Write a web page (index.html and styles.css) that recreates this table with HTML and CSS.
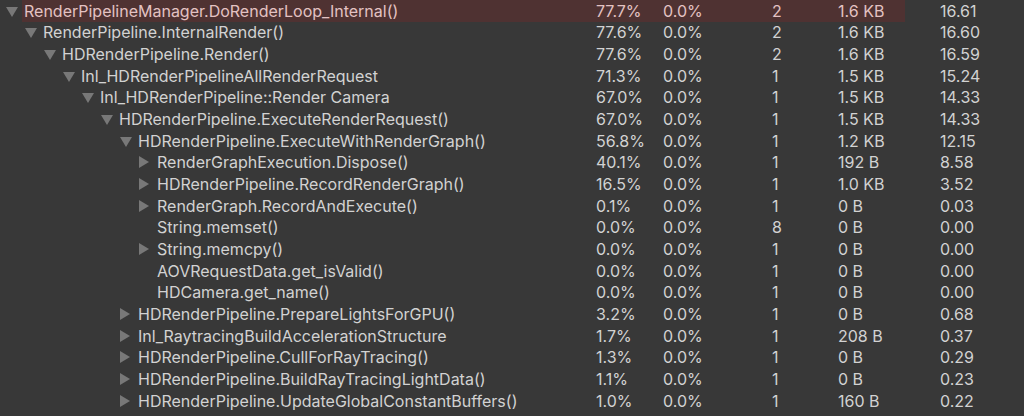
FILE: index.html
```html
<!DOCTYPE html>
<html>
<head>
<meta charset="utf-8">
<link rel="stylesheet" href="styles.css">
</head>
<body>
<div class="tree">
  <div class="row l0 selected"><span class="tw down"></span><div class="main"><span class="name">RenderPipelineManager.DoRenderLoop_Internal()</span><span class="c pct">77.7%</span><span class="c self">0.0%</span><span class="c calls">2</span><span class="c gc">1.6 KB</span></div><span class="time">16.61</span></div>
  <div class="row l1"><span class="tw down"></span><div class="main"><span class="name">RenderPipeline.InternalRender()</span><span class="c pct">77.6%</span><span class="c self">0.0%</span><span class="c calls">2</span><span class="c gc">1.6 KB</span></div><span class="time">16.60</span></div>
  <div class="row l2"><span class="tw down"></span><div class="main"><span class="name">HDRenderPipeline.Render()</span><span class="c pct">77.6%</span><span class="c self">0.0%</span><span class="c calls">2</span><span class="c gc">1.6 KB</span></div><span class="time">16.59</span></div>
  <div class="row l3"><span class="tw down"></span><div class="main"><span class="name">Inl_HDRenderPipelineAllRenderRequest</span><span class="c pct">71.3%</span><span class="c self">0.0%</span><span class="c calls">1</span><span class="c gc">1.5 KB</span></div><span class="time">15.24</span></div>
  <div class="row l4"><span class="tw down"></span><div class="main"><span class="name">Inl_HDRenderPipeline::Render Camera</span><span class="c pct">67.0%</span><span class="c self">0.0%</span><span class="c calls">1</span><span class="c gc">1.5 KB</span></div><span class="time">14.33</span></div>
  <div class="row l5"><span class="tw down"></span><div class="main"><span class="name">HDRenderPipeline.ExecuteRenderRequest()</span><span class="c pct">67.0%</span><span class="c self">0.0%</span><span class="c calls">1</span><span class="c gc">1.5 KB</span></div><span class="time">14.33</span></div>
  <div class="row l6"><span class="tw down"></span><div class="main"><span class="name">HDRenderPipeline.ExecuteWithRenderGraph()</span><span class="c pct">56.8%</span><span class="c self">0.0%</span><span class="c calls">1</span><span class="c gc">1.2 KB</span></div><span class="time">12.15</span></div>
  <div class="row l7"><span class="tw right"></span><div class="main"><span class="name">RenderGraphExecution.Dispose()</span><span class="c pct">40.1%</span><span class="c self">0.0%</span><span class="c calls">1</span><span class="c gc">192 B</span></div><span class="time">8.58</span></div>
  <div class="row l7"><span class="tw right"></span><div class="main"><span class="name">HDRenderPipeline.RecordRenderGraph()</span><span class="c pct">16.5%</span><span class="c self">0.0%</span><span class="c calls">1</span><span class="c gc">1.0 KB</span></div><span class="time">3.52</span></div>
  <div class="row l7"><span class="tw right"></span><div class="main"><span class="name">RenderGraph.RecordAndExecute()</span><span class="c pct">0.1%</span><span class="c self">0.0%</span><span class="c calls">1</span><span class="c gc">0 B</span></div><span class="time">0.03</span></div>
  <div class="row l7"><span class="tw"></span><div class="main"><span class="name">String.memset()</span><span class="c pct">0.0%</span><span class="c self">0.0%</span><span class="c calls">8</span><span class="c gc">0 B</span></div><span class="time">0.00</span></div>
  <div class="row l7"><span class="tw right"></span><div class="main"><span class="name">String.memcpy()</span><span class="c pct">0.0%</span><span class="c self">0.0%</span><span class="c calls">1</span><span class="c gc">0 B</span></div><span class="time">0.00</span></div>
  <div class="row l7"><span class="tw"></span><div class="main"><span class="name">AOVRequestData.get_isValid()</span><span class="c pct">0.0%</span><span class="c self">0.0%</span><span class="c calls">1</span><span class="c gc">0 B</span></div><span class="time">0.00</span></div>
  <div class="row l7"><span class="tw"></span><div class="main"><span class="name">HDCamera.get_name()</span><span class="c pct">0.0%</span><span class="c self">0.0%</span><span class="c calls">1</span><span class="c gc">0 B</span></div><span class="time">0.00</span></div>
  <div class="row l6"><span class="tw right"></span><div class="main"><span class="name">HDRenderPipeline.PrepareLightsForGPU()</span><span class="c pct">3.2%</span><span class="c self">0.0%</span><span class="c calls">1</span><span class="c gc">0 B</span></div><span class="time">0.68</span></div>
  <div class="row l6"><span class="tw right"></span><div class="main"><span class="name">Inl_RaytracingBuildAccelerationStructure</span><span class="c pct">1.7%</span><span class="c self">0.0%</span><span class="c calls">1</span><span class="c gc">208 B</span></div><span class="time">0.37</span></div>
  <div class="row l6"><span class="tw right"></span><div class="main"><span class="name">HDRenderPipeline.CullForRayTracing()</span><span class="c pct">1.3%</span><span class="c self">0.0%</span><span class="c calls">1</span><span class="c gc">0 B</span></div><span class="time">0.29</span></div>
  <div class="row l6"><span class="tw right"></span><div class="main"><span class="name">HDRenderPipeline.BuildRayTracingLightData()</span><span class="c pct">1.1%</span><span class="c self">0.0%</span><span class="c calls">1</span><span class="c gc">0 B</span></div><span class="time">0.23</span></div>
  <div class="row l6"><span class="tw right"></span><div class="main"><span class="name">HDRenderPipeline.UpdateGlobalConstantBuffers()</span><span class="c pct">1.0%</span><span class="c self">0.0%</span><span class="c calls">1</span><span class="c gc">160 B</span></div><span class="time">0.22</span></div>
</div>
</body>
</html>
```

FILE: styles.css
```css
html, body {
  margin: 0;
  padding: 0;
  background: #383838;
}
body {
  width: 1024px;
  height: 416px;
  overflow: hidden;
  font-family: Inter, "Noto Sans", sans-serif;
  font-size: 16px;
  color: #d2d2d2;
}
.tree {
  display: flex;
  flex-direction: column;
}
.row {
  display: flex;
  align-items: stretch;
  height: 21.67px;
}
.l0 { padding-left: 0; }
.l1 { padding-left: 19px; }
.l2 { padding-left: 38px; }
.l3 { padding-left: 57px; }
.l4 { padding-left: 76px; }
.l5 { padding-left: 95px; }
.l6 { padding-left: 114px; }
.l7 { padding-left: 133px; }
.tw {
  width: 22px;
  flex: none;
  display: flex;
  align-items: center;
  justify-content: flex-start;
}
.tw.down::before {
  content: "";
  margin-left: 6px;
  margin-top: 2px;
  border-left: 6px solid transparent;
  border-right: 6px solid transparent;
  border-top: 10px solid #787878;
}
.tw.right::before {
  content: "";
  margin-left: 6px;
  border-top: 6px solid transparent;
  border-bottom: 6px solid transparent;
  border-left: 10px solid #787878;
}
.main {
  flex: 1;
  display: flex;
  align-items: center;
  min-width: 0;
}
.name {
  flex: 1;
  padding-left: 2px;
  white-space: nowrap;
  overflow: hidden;
}
.c {
  flex: none;
  white-space: nowrap;
}
.pct { width: 67px; }
.self { width: 109px; }
.calls { width: 66px; }
.gc { width: 67px; }
.time {
  flex: none;
  width: 84px;
  padding-left: 35px;
  display: flex;
  align-items: center;
}
.selected .main {
  background: #4f3232;
  color: #e3c2c2;
}
```
